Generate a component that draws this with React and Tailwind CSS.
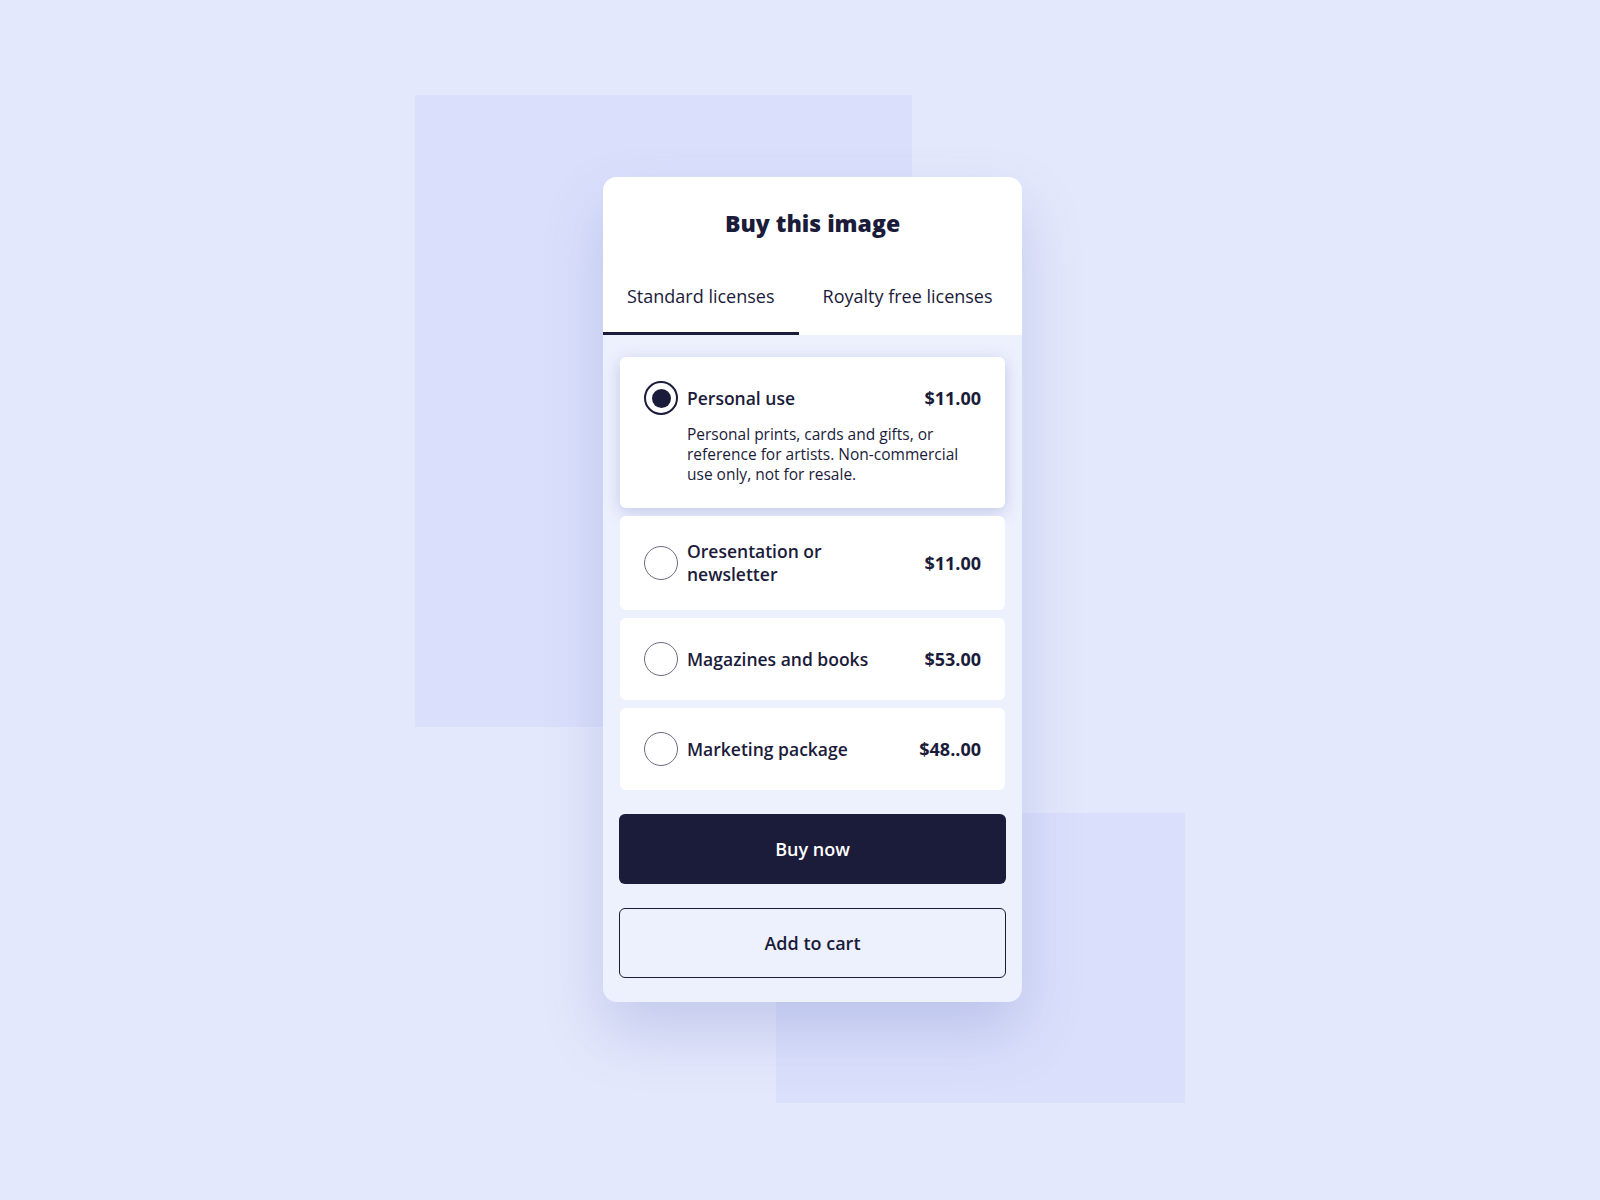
const options = [
  {
    id: "personal",
    title: ["Personal use"],
    price: "$11.00",
    desc: ["Personal prints, cards and gifts, or", "reference for artists. Non-commercial", "use only, not for resale."],
  },
  { id: "presentation", title: ["Oresentation or", "newsletter"], price: "$11.00" },
  { id: "magazines", title: ["Magazines and books"], price: "$53.00" },
  { id: "marketing", title: ["Marketing package"], price: "$48..00" },
];

function Radio({ checked }) {
  if (checked) {
    return (
      <span className="flex h-[34px] w-[34px] shrink-0 items-center justify-center rounded-full border-2 border-[#1b1b3a]">
        <span className="h-[19px] w-[19px] rounded-full bg-[#1b1b3a]"></span>
      </span>
    );
  }
  return <span className="h-[34px] w-[34px] shrink-0 rounded-full border-[1.5px] border-[#6b6b84]"></span>;
}

function Option({ opt, selected }) {
  return (
    <div
      className={
        "rounded-md bg-white px-6 py-6 " +
        (selected ? "shadow-[0_4px_16px_rgba(95,105,190,0.3)]" : "")
      }
    >
      <div className="flex items-center gap-[9px]">
        <Radio checked={selected} />
        <div className="flex-1 text-[17.5px] font-semibold leading-[23px] text-[#1b1b3a]">
          {opt.title.map((t) => (
            <div key={t}>{t}</div>
          ))}
        </div>
        <div className="text-[18px] font-bold text-[#1b1b3a]">{opt.price}</div>
      </div>
      {opt.desc && (
        <div className="mt-[9px] pl-[43px] text-[15.5px] leading-[20px] text-[#1b1b3a]">
          {opt.desc.map((d) => (
            <div key={d}>{d}</div>
          ))}
        </div>
      )}
    </div>
  );
}

export default function App() {
  return (
    <div
      className="relative h-[1200px] w-full overflow-hidden bg-[#e3e8fc] pl-[603px] pt-[177px]"
      style={{ fontFamily: "'Open Sans', Lato, sans-serif" }}
    >
      <div className="absolute left-[415px] top-[95px] h-[632px] w-[497px] bg-[#dae0fb]"></div>
      <div className="absolute left-[776px] top-[813px] h-[290px] w-[409px] bg-[#dae0fb]"></div>

      <div className="relative w-[419px] overflow-hidden rounded-[14px] bg-[#edf0fd] shadow-[0_30px_60px_rgba(85,95,180,0.22)]">
        <div className="bg-white pt-[30px]">
          <h1 className="text-center text-[23px] font-extrabold leading-8 text-[#1b1b3a]">Buy this image</h1>
          <div className="mt-6 flex">
            <button className="border-b-[3px] border-[#1b1b3a] px-6 pb-6 pt-[21px] text-[18px] leading-6 text-[#1b1b3a]">
              Standard licenses
            </button>
            <button className="border-b-[3px] border-transparent px-6 pb-6 pt-[21px] text-[18px] leading-6 text-[#1b1b3a]">
              Royalty free licenses
            </button>
          </div>
        </div>

        <div className="px-4 pb-6 pt-[22px]">
          <div className="flex flex-col gap-2 px-px">
            {options.map((o, i) => (
              <Option key={o.id} opt={o} selected={i === 0} />
            ))}
          </div>
          <button className="mt-6 h-[70px] w-full rounded-md bg-[#1b1b3a] text-[18px] font-semibold text-white">
            Buy now
          </button>
          <button className="mt-6 h-[70px] w-full rounded-md border border-[#1b1b3a] text-[18px] font-semibold text-[#1b1b3a]">
            Add to cart
          </button>
        </div>
      </div>
    </div>
  );
}
